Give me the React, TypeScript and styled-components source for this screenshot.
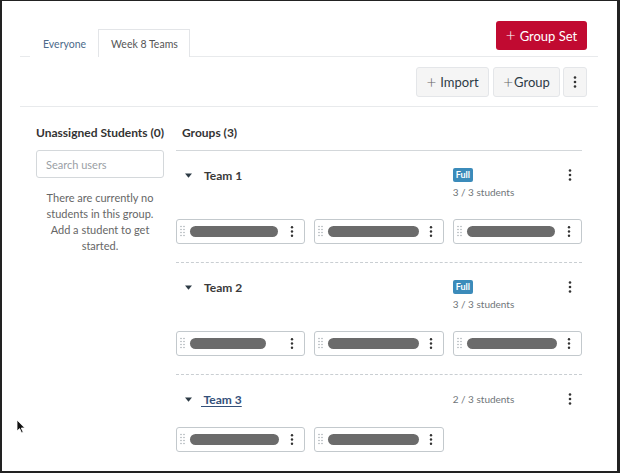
import styled, { createGlobalStyle } from 'styled-components';

const GlobalStyle = createGlobalStyle`
  html, body {
    margin: 0;
    padding: 0;
    background: #fff;
  }
  body {
    font-family: Lato, 'Noto Sans', 'Liberation Sans', sans-serif;
    color: #2d3b45;
  }
  * {
    box-sizing: border-box;
  }
`;

interface Group {
  name: string;
  full: boolean;
  count: number;
  link?: boolean;
  members: number[];
}

const GROUPS: Group[] = [
  { name: 'Team 1', full: true, count: 3, members: [88, 91, 88] },
  { name: 'Team 2', full: true, count: 3, members: [76, 91, 90] },
  { name: 'Team 3', full: false, count: 2, link: true, members: [89, 91] },
];

const Kebab = ({ size = 14 }: { size?: number }) => (
  <svg width="4" height={size} viewBox="0 0 4 14" fill="#333">
    <circle cx="2" cy="2.5" r="1.3" />
    <circle cx="2" cy="7" r="1.3" />
    <circle cx="2" cy="11.5" r="1.3" />
  </svg>
);

const DragHandle = () => (
  <svg width="5" height="13" viewBox="0 0 5 13" fill="#a5acb0">
    {[1.5, 4.5, 7.5, 10.5].map((y) => (
      <g key={y}>
        <circle cx="1" cy={y} r="0.75" />
        <circle cx="4" cy={y} r="0.75" />
      </g>
    ))}
  </svg>
);

const Caret = () => (
  <svg width="7" height="5" viewBox="0 0 7 5" fill="#2d3b45">
    <path d="M0 0.5 L7 0.5 L3.5 4.8 Z" />
  </svg>
);

const Cursor = () => (
  <CursorWrap>
    <svg width="10" height="15" viewBox="0 0 10 15">
      <path d="M1 1 L1 12 L3.6 9.6 L5.6 14 L7.2 13.3 L5.3 9 L8.8 9 Z" fill="#111" stroke="#fff" strokeWidth="0.8" />
    </svg>
  </CursorWrap>
);

const App = () => (
  <>
    <GlobalStyle />
    <Frame>
      <TopArea>
        <TabRow>
          <Tabs>
            <Tab>Everyone</Tab>
            <Tab $active>Week 8 Teams</Tab>
          </Tabs>
          <PrimaryButton>
            <Plus $light>+</Plus>
            Group Set
          </PrimaryButton>
        </TabRow>
        <Toolbar>
          <ToolButton $width={73} $space={4}>
            <Plus>+</Plus>
            Import
          </ToolButton>
          <ToolButton $width={67} $space={1}>
            <Plus>+</Plus>
            Group
          </ToolButton>
          <ToolButton $width={24}>
            <Kebab />
          </ToolButton>
        </Toolbar>
      </TopArea>

      <Main>
        <Sidebar>
          <ColumnTitle>Unassigned Students (0)</ColumnTitle>
          <SearchBox placeholder="Search users" />
          <EmptyText>
            There are currently no students in this group. Add a student to get started.
          </EmptyText>
        </Sidebar>

        <GroupsColumn>
          <GroupsTitle>Groups (3)</GroupsTitle>
          {GROUPS.map((g, i) => (
            <GroupBlock key={g.name} $last={i === GROUPS.length - 1}>
              <GroupHeader>
                <TitleCell>
                  <Caret />
                  <GroupName $link={g.link}>{g.link ? `\u00a0${g.name}` : g.name}</GroupName>
                </TitleCell>
                <span />
                <StatusCell>
                  <Status>
                    {g.full && <Badge>Full</Badge>}
                    <Count $inline={!g.full}>{g.count} / 3 students</Count>
                  </Status>
                  <HeaderKebab>
                    <Kebab />
                  </HeaderKebab>
                </StatusCell>
              </GroupHeader>
              <Members>
                {g.members.map((w, j) => (
                  <MemberCard key={j}>
                    <DragHandle />
                    <NameBar style={{ width: w }} />
                    <CardKebab>
                      <Kebab size={13} />
                    </CardKebab>
                  </MemberCard>
                ))}
              </Members>
            </GroupBlock>
          ))}
        </GroupsColumn>
      </Main>
      <Cursor />
    </Frame>
  </>
);

export default App;

const Frame = styled.div`
  position: relative;
  width: 620px;
  height: 473px;
  overflow: hidden;
  border-style: solid;
  border-color: #222;
  border-width: 1px 3px 2px 2px;
  background: #fff;
`;

const TopArea = styled.div`
  padding: 0 19px 0 18px;
`;

const TabRow = styled.div`
  display: flex;
  justify-content: space-between;
  align-items: flex-end;
  height: 56px;
  border-bottom: 1px solid #e8eaec;
`;

const Tabs = styled.div`
  display: flex;
  align-items: flex-end;
  padding-left: 10px;
`;

const Tab = styled.div<{ $active?: boolean }>`
  height: 28px;
  padding: 0 11px 0 12px;
  margin-bottom: -1px;
  display: flex;
  align-items: center;
  font-size: 10.5px;
  color: ${({ $active }) => ($active ? '#555' : '#4c6a8a')};
  background: #fff;
  border: 1px solid ${({ $active }) => ($active ? '#e3e5e8' : 'transparent')};
  border-bottom: none;
`;

const PrimaryButton = styled.div`
  height: 29px;
  width: 91px;
  margin: 0 11px 6px 0;
  border-radius: 3px;
  background: #c10a31;
  color: #fff;
  font-size: 13px;
  display: flex;
  align-items: center;
  justify-content: center;
`;

const Toolbar = styled.div`
  display: flex;
  justify-content: flex-end;
  gap: 3px;
  padding: 10px 11px 9px 0;
  border-bottom: 1px solid #e8eaec;
`;

const ToolButton = styled.div<{ $width: number; $space?: number }>`
  width: ${({ $width }) => $width}px;
  height: 30px;
  border: 1px solid #e4e6e9;
  border-radius: 3px;
  background: #f5f5f5;
  color: #2d3b45;
  font-size: 13px;
  display: flex;
  align-items: center;
  justify-content: center;
  & > span {
    margin-right: ${({ $space = 0 }) => $space}px;
  }
  &:first-child {
    margin-right: 1px;
  }
`;

const Plus = styled.span<{ $light?: boolean }>`
  font-size: 17px;
  font-weight: 300;
  line-height: 1;
  color: ${({ $light }) => ($light ? '#fff' : '#666')};
  margin-top: -2px;
  margin-right: ${({ $light }) => ($light ? '4px' : '0')};
`;

const Main = styled.div`
  display: flex;
  gap: 12px;
  padding: 18px 0 0 34px;
`;

const Sidebar = styled.div`
  width: 128px;
  display: flex;
  flex-direction: column;
`;

const ColumnTitle = styled.div`
  font-size: 12px;
  font-weight: 700;
  line-height: 16px;
  color: #333;
  white-space: nowrap;
`;

const SearchBox = styled.input`
  margin-top: 9px;
  height: 28px;
  width: 128px;
  border: 1px solid #d4d8db;
  border-radius: 3px;
  padding: 0 9px;
  font-family: inherit;
  font-size: 11px;
  outline: none;
  &::placeholder {
    color: #9aa0a5;
  }
`;

const EmptyText = styled.p`
  margin: 12px 0 0;
  text-align: center;
  font-size: 11px;
  line-height: 16px;
  color: #666;
  padding: 0 8px;
`;

const GroupsColumn = styled.div`
  width: 406px;
`;

const GroupsTitle = styled(ColumnTitle)`
  padding: 0 0 9px 6px;
  border-bottom: 1px solid #d3d7da;
`;

const GroupBlock = styled.div<{ $last?: boolean }>`
  padding: 17px 0 18px;
  border-bottom: ${({ $last }) => ($last ? 'none' : '1px dashed #c9ced2')};
`;

const GroupHeader = styled.div`
  display: grid;
  grid-template-columns: 1fr 1fr 1fr;
  gap: 9px;
  align-items: start;
`;

const TitleCell = styled.div`
  display: flex;
  align-items: center;
  gap: 12px;
  height: 14px;
  padding-left: 9px;
`;

const GroupName = styled.span<{ $link?: boolean }>`
  font-size: 12px;
  font-weight: 700;
  color: ${({ $link }) => ($link ? '#33507a' : '#3a3a3a')};
  text-decoration: ${({ $link }) => ($link ? 'underline' : 'none')};
  text-underline-offset: 2px;
  margin-left: ${({ $link }) => ($link ? '-3px' : '0')};
`;

const StatusCell = styled.div`
  display: flex;
  justify-content: space-between;
  align-items: flex-start;
`;

const Status = styled.div`
  display: flex;
  flex-direction: column;
  align-items: flex-start;
  gap: 4px;
`;

const Badge = styled.span`
  height: 14px;
  padding: 0 3px;
  border-radius: 2px;
  background: #3b8bba;
  color: #fff;
  font-size: 9px;
  font-weight: 700;
  line-height: 14px;
`;

const Count = styled.span<{ $inline?: boolean }>`
  font-size: 10px;
  line-height: ${({ $inline }) => ($inline ? '14px' : '12px')};
  color: #6f7579;
`;

const HeaderKebab = styled.span`
  display: flex;
  padding-right: 10px;
`;

const Members = styled.div`
  display: grid;
  grid-template-columns: repeat(3, 1fr);
  gap: 9px;
  margin-top: 21px;
`;

const MemberCard = styled.div`
  height: 25px;
  border: 1px solid #c3c9cd;
  border-radius: 3px;
  display: flex;
  align-items: center;
  padding: 0 10px 0 3px;
  gap: 5px;
`;

const NameBar = styled.div`
  height: 11px;
  border-radius: 6px;
  background: #6b6b6b;
`;

const CardKebab = styled.span`
  margin-left: auto;
  display: flex;
`;

const CursorWrap = styled.div`
  position: absolute;
  left: 14px;
  top: 418px;
  display: flex;
`;
